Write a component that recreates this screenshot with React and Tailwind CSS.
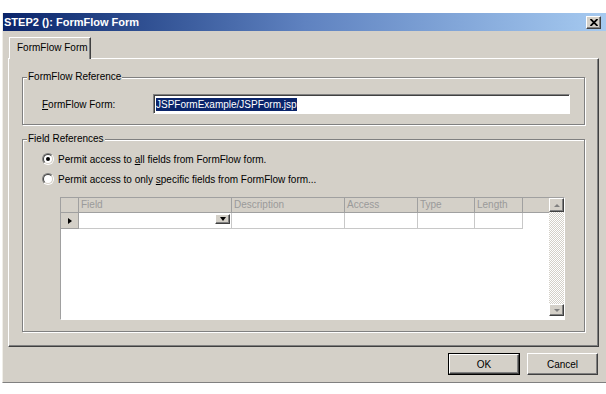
const raised =
  'border border-t-white border-l-white border-r-[#404040] border-b-[#404040] shadow-[inset_-1px_-1px_0_#808080]'

function Radio({ checked }) {
  return (
    <span className="w-[12px] h-[12px] shrink-0 rounded-full border border-t-[#808080] border-l-[#808080] border-r-white border-b-white flex">
      <span className="flex-1 rounded-full border border-t-[#404040] border-l-[#404040] border-r-[#d4d0c8] border-b-[#d4d0c8] bg-white flex items-center justify-center">
        {checked && <span className="w-[4px] h-[4px] rounded-full bg-black" />}
      </span>
    </span>
  )
}

function Group({ title, className = '', children }) {
  return (
    <fieldset
      className={`border border-[#808080] shadow-[inset_1px_1px_0_#fff,1px_1px_0_#fff] ${className}`}
    >
      <legend className="ml-[4px] px-[1px] leading-[12px] bg-[#d4d0c8]">{title}</legend>
      {children}
    </fieldset>
  )
}

const cols = [
  { name: 'Field', w: 'w-[153px]' },
  { name: 'Description', w: 'w-[113px]' },
  { name: 'Access', w: 'w-[73px]' },
  { name: 'Type', w: 'w-[57px]' },
  { name: 'Length', w: 'w-[48px]' },
]

export default function App() {
  return (
    <div className="w-[606px] h-[394px] bg-white overflow-hidden font-['Liberation_Sans',Arial,sans-serif] text-[10px] text-black">
      <div className="mt-[13px] ml-[2px] h-[370px] bg-[#d4d0c8] border-l border-[#f0eee8] border-b border-b-[#808080] flex flex-col">
        {/* Title bar */}
        <div className="h-[18px] flex items-center justify-between pl-[1px] pr-[5px] bg-gradient-to-r from-[#0a246a] via-[#5f82c0] to-[#a6caf0]">
          <span className="text-white font-bold text-[11px] leading-none">STEP2 (): FormFlow Form</span>
          <button className={`w-[15px] h-[13px] bg-[#d4d0c8] flex items-center justify-center ${raised}`}>
            <svg width="8" height="7" viewBox="0 0 8 7">
              <path d="M0.5 0 L7.5 7 M7.5 0 L0.5 7" stroke="#000" strokeWidth="1.8" />
            </svg>
          </button>
        </div>

        <div className="flex-1 flex flex-col pt-[6px] pl-[5px] pr-[7px]">
          {/* Tab */}
          <div className="flex">
            <div className="ml-[1px] w-[82px] h-[22px] -mb-px relative z-10 bg-[#d4d0c8] border-t border-l border-white border-r border-r-[#404040] shadow-[inset_-1px_0_0_#808080] pl-[7px] pt-[4px] leading-[12px]">
              FormFlow Form
            </div>
          </div>

          {/* Panel */}
          <div className="h-[289px] border border-t-white border-l-white border-r-[#404040] border-b-[#404040] shadow-[inset_-1px_-1px_0_#808080] pt-[12px] px-[13px]">
            <Group title="FormFlow Reference" className="pt-[11px] pb-[10px]">
              <div className="flex items-center pl-[19px] pr-[14px]">
                <span className="w-[111px]">
                  <span className="underline">F</span>ormFlow Form:
                </span>
                <div className="flex-1 h-[20px] bg-white border border-t-[#808080] border-l-[#808080] border-r-white border-b-white shadow-[inset_1px_1px_0_#404040] flex items-center pl-[2px]">
                  <span className="bg-[#0a246a] text-white leading-[13px]">JSPFormExample/JSPForm.jsp</span>
                </div>
              </div>
            </Group>

            <Group title="Field References" className="mt-[8px] pt-[7px] pb-[11px]">
              <div className="pl-[19px] pr-[19px]">
                <div className="flex flex-col gap-[6px]">
                  <label className="h-[14px] flex items-center gap-[4px]">
                    <Radio checked />
                    <span>
                      Permit access to <span className="underline">a</span>ll fields from FormFlow form.
                    </span>
                  </label>
                  <label className="h-[14px] flex items-center gap-[4px]">
                    <Radio />
                    <span>
                      Permit access to only <span className="underline">s</span>pecific fields from FormFlow form...
                    </span>
                  </label>
                </div>

                {/* Grid */}
                <div className="mt-[11px] ml-[18px] h-[123px] bg-white border border-t-[#a0a0a0] border-l-[#a0a0a0] border-r-white border-b-white flex">
                  <div className="flex-1 flex flex-col">
                    <div className="h-[15px] bg-[#d4d0c8] flex border-b border-[#a0a0a0]">
                      <div className="w-[18px] border-r border-[#a0a0a0]" />
                      {cols.map(c => (
                        <div key={c.name} className={`${c.w} border-r border-[#a0a0a0] pl-[2px] text-[#9a9a9a] leading-[14px]`}>
                          {c.name}
                        </div>
                      ))}
                    </div>
                    <div className="h-[16px] flex">
                      <div className="w-[18px] bg-[#d4d0c8] border-r border-b border-[#a0a0a0] flex items-center justify-center">
                        <span className="w-0 h-0 border-y-[3.5px] border-y-transparent border-l-[4px] border-l-black" />
                      </div>
                      <div className="w-[153px] border-r border-b border-[#c8c8c8] flex items-start justify-end pt-[1px] pr-[1px]">
                        <div className={`w-[15px] h-[10px] bg-[#d4d0c8] flex items-center justify-center ${raised}`}>
                          <span className="w-0 h-0 border-x-[3.5px] border-x-transparent border-t-[4px] border-t-black" />
                        </div>
                      </div>
                      {cols.slice(1).map(c => (
                        <div key={c.name} className={`${c.w} border-r border-b border-[#c8c8c8]`} />
                      ))}
                    </div>
                  </div>
                  <div className="w-[15px] flex flex-col pb-[3px]">
                    <div className={`h-[14px] bg-[#d4d0c8] flex items-center justify-center ${raised}`}>
                      <span className="w-0 h-0 border-x-[3px] border-x-transparent border-b-[3px] border-b-[#808080]" />
                    </div>
                    <div className="flex-1 bg-[repeating-conic-gradient(#ffffff_0_25%,#d4d0c8_0_50%)] bg-[length:2px_2px]" />
                    <div className={`h-[12px] bg-[#d4d0c8] flex items-center justify-center ${raised}`}>
                      <span className="w-0 h-0 border-x-[3px] border-x-transparent border-t-[3px] border-t-[#808080]" />
                    </div>
                  </div>
                </div>
              </div>
            </Group>
          </div>

          {/* Buttons */}
          <div className="mt-[6px] flex justify-end gap-[7px] pr-[1px]">
            <button className="w-[72px] h-[22px] border border-black bg-[#d4d0c8] p-0 flex">
              <span className={`flex-1 flex items-center justify-center ${raised}`}>OK</span>
            </button>
            <button className={`w-[71px] h-[22px] bg-[#d4d0c8] flex items-center justify-center ${raised}`}>
              Cancel
            </button>
          </div>
        </div>
      </div>
    </div>
  )
}
